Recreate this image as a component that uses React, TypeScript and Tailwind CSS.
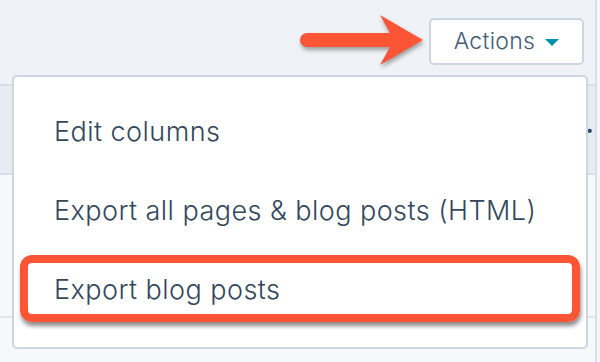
import React from 'react';

function ActionsButton() {
  return (
    <button className="flex h-[47px] w-[155px] items-center justify-center gap-[10px] rounded-[5px] border-2 border-[#cbd6e2] bg-white text-[23px] font-[350] tracking-[0.3px] text-[#425b76]">
      <span>Actions</span>
      <svg width="14" height="8" viewBox="0 0 14 8" className="mt-[2px]">
        <path d="M0 0h14L7 7z" fill="#0091ae" />
      </svg>
    </button>
  );
}

function Arrow() {
  return (
    <svg
      className="absolute left-[295px] top-[12px]"
      width="135"
      height="58"
      viewBox="0 0 135 58"
      style={{ filter: 'drop-shadow(1px 3px 2px rgba(0,0,0,0.35))' }}
    >
      <path
        d="M12 21 H95 L85 3 L128 28 L85 53 L95 35 H12 A7 7 0 0 1 12 21 Z"
        fill="#fb5535"
      />
    </svg>
  );
}

const items = ['Edit columns', 'Export all pages & blog posts (HTML)', 'Export blog posts'];

export default function App() {
  return (
    <div
      className="relative h-[362px] w-[600px] overflow-hidden bg-[#f5f7fa]"
      style={{ fontFamily: 'Inter, "Noto Sans", sans-serif' }}
    >
      {/* page underneath */}
      <div className="flex h-full w-[597px] flex-col border-r-2 border-[#d7dfe8]">
        <div className="flex h-[86px] shrink-0 items-start justify-end border-b-2 border-[#d5dde7] bg-[#eff2f6] pr-[11px] pt-[18px]">
          <ActionsButton />
        </div>
        <div className="flex h-[89px] shrink-0 items-center justify-end border-b-2 border-[#d5dde7] bg-[#e7ecf2] pr-[3px]">
          <span className="text-[14px] font-bold leading-none tracking-[-1px] text-[#33475b]">••</span>
        </div>
        <div className="h-[143px] shrink-0 border-b-2 border-[#dfe5ec] bg-[#f6f8fa]" />
        <div className="flex-1 bg-[#f6f8fa]" />
      </div>

      <Arrow />

      {/* dropdown menu */}
      <div className="absolute left-[12px] top-[75px] flex h-[274px] w-[576px] flex-col rounded-[5px] border-2 border-[#cbd6e2] bg-white py-[16px]">
        {items.map((label, i) => (
          <div
            key={label}
            className="relative flex h-[79px] items-center pl-[40px] text-[27px] font-[350] tracking-[0.45px] text-[#33475b]"
          >
            {i === 2 ? (
              <div
                className="absolute left-[6px] top-[4px] h-[67px] w-[560px] rounded-[12px] border-[8px] border-[#fb5535]"
                style={{ boxShadow: '1px 4px 4px rgba(0,0,0,0.45)' }}
              />
            ) : null}
            <span className="relative">{label}</span>
          </div>
        ))}
      </div>
    </div>
  );
}
